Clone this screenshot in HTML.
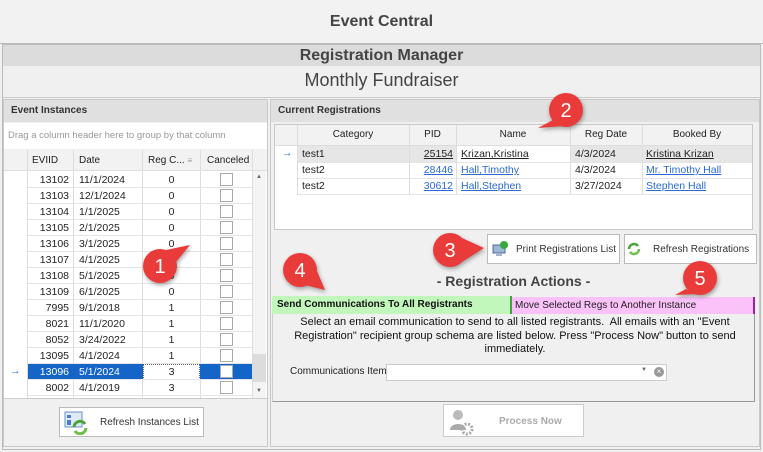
<!DOCTYPE html>
<html><head><meta charset="utf-8"><style>
*{box-sizing:border-box;margin:0;padding:0}
body{width:763px;height:452px;background:#f0f0f0;font-family:"Liberation Sans",sans-serif;font-size:10.5px;color:#222;position:relative;overflow:hidden}
.a{position:absolute;white-space:nowrap}
.c{text-align:center}
.hdr{background:#e0e0e0;font-weight:bold;color:#333;font-size:10px;padding-left:7px;line-height:22px}
.chk{position:absolute;width:13px;height:13px;border:1px solid #aaa;background:#fff}
.lnk{color:#2a6ad6;text-decoration:underline}
.btn{position:absolute;background:#fff;border:1px solid #bbb;font-size:10px;color:#333}
.gh{font-size:10px}
</style></head><body>
<div class="a" style="left:0;top:0;width:763px;height:44px;background:#f2f2f2;border-bottom:1px solid #bbb"></div>
<div class="a c" style="left:0;top:13px;width:763px;font-weight:bold;font-size:16px;color:#444">Event Central</div>
<div class="a" style="left:2px;top:44px;width:759px;height:406px;border:1px solid #bbb"></div>
<div class="a c" style="left:3px;top:45px;width:757px;height:21px;background:#dcdcdc;font-weight:bold;font-size:16px;color:#444;line-height:21px">Registration Manager</div>
<div class="a c" style="left:3px;top:70px;width:757px;font-size:18px;color:#444">Monthly Fundraiser</div>
<div class="a" style="left:3px;top:97px;width:757px;border-top:1px solid #ccc"></div>

<div class="a" style="left:3px;top:99px;width:265px;height:348px;border:1px solid #c8c8c8"></div>
<div class="a hdr" style="left:4px;top:100px;width:263px">Event Instances</div>
<div class="a" style="left:4px;top:123px;width:263px;height:26px;background:#fff;color:#999;font-size:9.5px;line-height:26px;padding-left:4px">Drag a column header here to group by that column</div>
<div class="a" style="left:4px;top:150px;width:263px;height:248px;background:#fff;border-top:1px solid #ddd"></div>
<div class="a" style="left:4px;top:150px;width:263px;height:21px;background:#f2f2f2;border-bottom:1px solid #ddd"></div>
<div class="a" style="left:27px;top:150px;width:1px;height:248px;background:#ddd"></div>
<div class="a gh" style="left:32px;top:155px">EVIID</div>
<div class="a" style="left:73px;top:150px;width:1px;height:248px;background:#ddd"></div>
<div class="a gh" style="left:79px;top:155px">Date</div>
<div class="a" style="left:142px;top:150px;width:1px;height:248px;background:#ddd"></div>
<div class="a gh" style="left:148px;top:155px">Reg C... <span style="color:#999;font-size:8px">&#8801;</span></div>
<div class="a" style="left:200px;top:150px;width:1px;height:248px;background:#ddd"></div>
<div class="a gh" style="left:207px;top:155px">Canceled</div>
<div class="a" style="left:252px;top:150px;width:1px;height:248px;background:#ddd"></div>
<div class="a" style="left:253px;top:171px;width:13px;height:227px;background:#f4f4f4"></div>
<div class="a" style="left:253px;top:354px;width:13px;height:28px;background:#dcdcdc"></div>
<div class="a" style="left:256px;top:174px;font-size:6px;color:#666">&#9650;</div>
<div class="a" style="left:256px;top:388px;font-size:6px;color:#666">&#9660;</div>
<div id="rows"></div>
<div class="a" style="left:4px;top:398px;width:263px;border-top:1px solid #ccc"></div>
<div class="btn" style="left:59px;top:407px;width:145px;height:30px">
<svg class="a" style="left:4px;top:3px" width="26" height="24"><rect x="1" y="1" width="17" height="15" fill="#dfeaf7" stroke="#6b8fc4"/><rect x="3" y="4" width="4" height="3" fill="#4a7cc7"/><rect x="3" y="9" width="4" height="5" fill="#4a7cc7"/><path d="M10 16a6 6 0 0 1 11-3" stroke="#4aa33a" stroke-width="3" fill="none"/><path d="M22 17a6 6 0 0 1-11 3" stroke="#6cc04a" stroke-width="3" fill="none"/></svg>
<span class="a" style="left:40px;top:9px">Refresh Instances List</span></div>

<div class="a" style="left:270px;top:99px;width:490px;height:348px;border:1px solid #c8c8c8"></div>
<div class="a hdr" style="left:271px;top:100px;width:488px">Current Registrations</div>
<div class="a" style="left:274px;top:124px;width:479px;height:106px;background:#fff;border:1px solid #c8c8c8"></div>
<div class="a" style="left:275px;top:125px;width:477px;height:21px;background:#f2f2f2;border-bottom:1px solid #ddd"></div>
<div class="a" style="left:297px;top:146px;width:455px;height:16px;background:#e6e6e6"></div>
<div class="a c gh" style="left:297px;top:129px;width:112px">Category</div>
<div class="a c gh" style="left:409px;top:129px;width:47px">PID</div>
<div class="a c gh" style="left:456px;top:129px;width:114px">Name</div>
<div class="a c gh" style="left:570px;top:129px;width:72px">Reg Date</div>
<div class="a c gh" style="left:642px;top:129px;width:110px">Booked By</div>
<div class="a" style="left:297px;top:125px;width:1px;height:70px;background:#ddd"></div>
<div class="a" style="left:409px;top:125px;width:1px;height:70px;background:#ddd"></div>
<div class="a" style="left:456px;top:125px;width:1px;height:70px;background:#ddd"></div>
<div class="a" style="left:570px;top:125px;width:1px;height:70px;background:#ddd"></div>
<div class="a" style="left:642px;top:125px;width:1px;height:70px;background:#ddd"></div>
<div class="a" style="left:297px;top:162px;width:455px;border-top:1px solid #e4e4e4"></div>
<div class="a" style="left:297px;top:178px;width:455px;border-top:1px solid #e4e4e4"></div>
<div class="a" style="left:297px;top:194px;width:455px;border-top:1px solid #e4e4e4"></div>
<div class="a" style="left:457px;top:146px;width:113px;height:16px;background:#fff"></div>
<div class="a" style="left:282px;top:147px;color:#2a6ad6">&#8594;</div>
<div class="a" style="left:302px;top:148px">test1</div><div class="a" style="left:302px;top:164px">test2</div><div class="a" style="left:302px;top:180px">test2</div>
<div class="a" style="left:409px;top:148px;width:44px;text-align:right;text-decoration:underline">25154</div>
<div class="a lnk" style="left:409px;top:164px;width:44px;text-align:right">28446</div>
<div class="a lnk" style="left:409px;top:180px;width:44px;text-align:right">30612</div>
<div class="a" style="left:461px;top:148px;text-decoration:underline">Krizan,Kristina</div>
<div class="a lnk" style="left:461px;top:164px">Hall,Timothy</div>
<div class="a lnk" style="left:461px;top:180px">Hall,Stephen</div>
<div class="a" style="left:575px;top:148px">4/3/2024</div><div class="a" style="left:575px;top:164px">4/3/2024</div><div class="a" style="left:575px;top:180px">3/27/2024</div>
<div class="a" style="left:646px;top:148px;text-decoration:underline">Kristina Krizan</div>
<div class="a lnk" style="left:646px;top:164px">Mr. Timothy Hall</div>
<div class="a lnk" style="left:646px;top:180px">Stephen Hall</div>

<div class="btn" style="left:487px;top:234px;width:133px;height:30px">
<svg class="a" style="left:3px;top:5px" width="18" height="18"><rect x="2" y="5" width="12" height="8" fill="#9fb7d6" stroke="#4a6a99"/><circle cx="13" cy="5" r="4" fill="#3aa83a"/><path d="M5 15h6" stroke="#4a6a99"/></svg>
<span class="a" style="left:28px;top:9px">Print Registrations List</span></div>
<div class="btn" style="left:624px;top:234px;width:133px;height:30px">
<svg class="a" style="left:2px;top:7px" width="14" height="14"><path d="M2 7a5 5 0 0 1 9-3" stroke="#4aa33a" stroke-width="2.5" fill="none"/><path d="M12 7a5 5 0 0 1-9 3" stroke="#6cc04a" stroke-width="2.5" fill="none"/></svg>
<span class="a" style="left:28px;top:9px">Refresh Registrations</span></div>

<div class="a c" style="left:272px;top:273px;width:483px;font-weight:bold;font-size:14px;color:#444">- Registration Actions -</div>
<div class="a" style="left:272px;top:296px;width:240px;height:18px;background:#c2f7bc;border-right:2px solid #3aa83a;font-weight:bold;font-size:10px;line-height:18px;padding-left:5px;color:#111">Send Communications To All Registrants</div>
<div class="a" style="left:512px;top:297px;width:243px;height:17px;background:#fbc2fa;border-right:2px solid #a020a0;font-size:10px;line-height:18px;padding-left:3px;color:#222">Move Selected Regs to Another Instance</div>
<div class="a" style="left:272px;top:314px;width:483px;height:88px;border:1px solid #999;border-top:none;border-left:1px solid #ccc"></div>
<div class="a c" style="left:282px;top:316px;width:466px;font-size:11px;line-height:13.5px;color:#111;white-space:normal">Select an email communication to send to all listed registrants.&nbsp; All emails with an "Event Registration" recipient group schema are listed below. Press "Process Now" button to send immediately.</div>
<div class="a" style="left:290px;top:366px;font-size:10px">Communications Item</div>
<div class="a" style="left:386px;top:364px;width:281px;height:17px;background:#fff;border:1px solid #ccc"></div>
<div class="a" style="left:641px;top:367px;font-size:6px;color:#666">&#9660;</div>
<div class="a" style="left:654px;top:367px;width:10px;height:10px;border-radius:50%;background:#999;color:#fff;font-size:8px;line-height:10px;text-align:center">&#215;</div>
<div class="btn" style="left:443px;top:404px;width:141px;height:33px;border-color:#ccc">
<svg class="a" style="left:4px;top:3px" width="26" height="28"><circle cx="10" cy="7" r="5" fill="#bbb"/><path d="M2 22c0-8 16-8 16 0z" fill="#aaa"/><circle cx="19" cy="21" r="5" fill="none" stroke="#aaa" stroke-width="3" stroke-dasharray="2 1.5"/></svg>
<span class="a" style="left:55px;top:11px;font-weight:bold;color:#aaa">Process Now</span></div>

<svg class="a" style="left:0;top:0" width="763" height="452">
<g fill="#ea3b3b" style="filter:drop-shadow(1px 2px 2px rgba(0,0,0,.35))">
<circle cx="160" cy="266" r="17"/><path d="M166 250 L190 245 L176 262z"/>
<circle cx="566" cy="110" r="17"/><path d="M553 120 L538 128 L564 126z"/>
<circle cx="450" cy="250" r="17"/><path d="M462 238 L484 248 L462 262z"/>
<circle cx="300" cy="270" r="17"/><path d="M305 285 L325 290 L314 264z"/>
<circle cx="700" cy="278" r="17"/><path d="M686 289 L675 295 L697 294z"/>
</g>
<g fill="#fff" font-family="Liberation Sans,sans-serif" font-size="20" text-anchor="middle">
<text x="160" y="273">1</text><text x="566" y="117">2</text><text x="450" y="257">3</text><text x="300" y="277">4</text><text x="700" y="285">5</text></g>
</svg>

<script>
var d=[["13102","11/1/2024","0"],["13103","12/1/2024","0"],["13104","1/1/2025","0"],["13105","2/1/2025","0"],["13106","3/1/2025","0"],["13107","4/1/2025","0"],["13108","5/1/2025","0"],["13109","6/1/2025","0"],["7995","9/1/2018","1"],["8021","11/1/2020","1"],["8052","3/24/2022","1"],["13095","4/1/2024","1"],["13096","5/1/2024","3"],["8002","4/1/2019","3"]];
var h="";
d.forEach(function(r,i){var y=172+i*16;var sel=i==12;
if(sel){h+='<div class="a" style="left:28px;top:'+y+'px;width:224px;height:16px;background:#1565c8"></div><div class="a" style="left:143px;top:'+y+'px;width:57px;height:16px;background:#fff;border:1px dotted #666"></div><div class="a" style="left:10px;top:'+(y+1)+'px;color:#2a6ad6">&#8594;</div>';}
var col=sel?'#fff':'#222';
h+='<div class="a" style="left:28px;top:'+(y+15)+'px;width:224px;border-top:1px solid #e4e4e4"></div>';
h+='<div class="a" style="left:28px;top:'+(y+2)+'px;width:41px;text-align:right;color:'+col+'">'+r[0]+'</div>';
h+='<div class="a" style="left:79px;top:'+(y+2)+'px;color:'+col+'">'+r[1]+'</div>';
h+='<div class="a c" style="left:143px;top:'+(y+2)+'px;width:57px">'+r[2]+'</div>';
h+='<div class="chk" style="left:220px;top:'+(y+1)+'px"></div>';});
document.getElementById("rows").innerHTML=h;
</script>
</body></html>
